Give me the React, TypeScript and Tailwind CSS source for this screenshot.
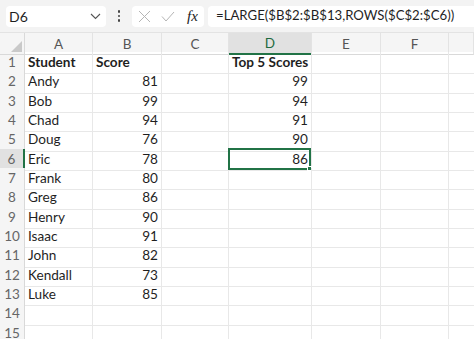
import React from 'react';

const rows: [string, string, string][] = [
    ["Student", "Score", "Top 5 Scores"],
    ["Andy", "81", "99"],
    ["Bob", "99", "94"],
    ["Chad", "94", "91"],
    ["Doug", "76", "90"],
    ["Eric", "78", "86"],
    ["Frank", "80", ""],
    ["Greg", "86", ""],
    ["Henry", "90", ""],
    ["Isaac", "91", ""],
    ["John", "82", ""],
    ["Kendall", "73", ""],
    ["Luke", "85", ""],
    ["", "", ""],
    ["", "", ""],
];

const columns: string[] = ["A", "B", "C", "D", "E", "F", ""];

const gridCols = "grid grid-cols-[25px_68px_69px_67px_83px_69px_68px_25px]";

const App = () => {
    return (
        <div className="w-[474px] h-[339px] overflow-hidden bg-white text-[#1f1f1f]"
             style={{fontFamily: 'Lato, "Open Sans", sans-serif'}}>
            {/* formula bar */}
            <div className="h-[33px] bg-[#f3f3f3] flex items-center pl-[6px] gap-[4px] border-b border-[#e3e3e3]">
                <div className="w-[100px] h-[21px] bg-white rounded-[4px] flex items-center justify-between pl-[3px] pr-[5px] text-[14px]">
                    <span>D6</span>
                    <svg width="11" height="7" viewBox="0 0 11 7" fill="none" stroke="#555" strokeWidth="1.1">
                        <path d="M1 1l4.5 4.5L10 1"/>
                    </svg>
                </div>
                <div className="w-[18px] flex flex-col items-center gap-[2px]">
                    <span className="w-[2.5px] h-[2.5px] rounded-full bg-[#444]"/>
                    <span className="w-[2.5px] h-[2.5px] rounded-full bg-[#444]"/>
                    <span className="w-[2.5px] h-[2.5px] rounded-full bg-[#444]"/>
                </div>
                <div className="w-[72px] h-[21px] bg-white rounded-[4px] flex items-center pl-[6px] gap-[10px]">
                    <svg width="13" height="13" viewBox="0 0 13 13" fill="none" stroke="#b5b5b5" strokeWidth="1">
                        <path d="M1 1l11 11M12 1L1 12"/>
                    </svg>
                    <svg width="14" height="11" viewBox="0 0 14 11" fill="none" stroke="#b5b5b5" strokeWidth="1">
                        <path d="M1 5.5l4 4.5L13 1"/>
                    </svg>
                    <span className="italic text-[15px] text-[#222] ml-[2px]"
                          style={{fontFamily: '"Liberation Serif", serif'}}>fx</span>
                </div>
                <div className="flex-1 h-[21px] bg-white rounded-l-[4px] flex items-center pl-[8px] text-[13.2px] whitespace-nowrap">
                    =LARGE($B$2:$B$13,ROWS($C$2:$C6))
                </div>
            </div>
            {/* column headers */}
            <div className={`${gridCols} h-[19px] bg-[#f5f5f5] text-[13.5px] text-[#555]`}>
                <div className="relative border-r border-[#d9d9d9] border-b">
                    <svg className="absolute right-[2px] bottom-[2px]" width="11" height="11" viewBox="0 0 11 11">
                        <path d="M11 0V11H0Z" fill="#c9c9c9"/>
                    </svg>
                </div>
                {columns.map((c, i) => (
                    <div key={i}
                         className={`flex items-center justify-center border-r border-[#e3e3e3] ${c === "D" ? "bg-[#e1e1e1] border-b-2 border-b-[#217346] text-[#1e6b40]" : "border-b border-b-[#d9d9d9]"}`}>
                        {c}
                    </div>
                ))}
            </div>
            {/* rows */}
            {rows.map((r, i) => (
                <div key={i} className={`${gridCols} h-[19.33px] text-[13.6px] whitespace-nowrap`}>
                    <div className={`flex items-end justify-center pb-[1px] text-[13.5px] text-[#666] ${i === 5 ? "bg-[#e1e1e1] border-r-2 border-[#217346] text-[#1e6b40]" : "bg-[#f5f5f5] border-r border-[#d9d9d9]"} border-b border-b-[#e8e8e8]`}>
                        {i + 1}
                    </div>
                    <div className={`flex items-end pl-[3px] pb-[1px] border-r border-b border-[#e8e8e8] ${i === 0 ? "font-bold" : ""}`}>
                        {r[0]}
                    </div>
                    <div className={`flex items-end pb-[1px] border-r border-b border-[#e8e8e8] ${i === 0 ? "font-bold pl-[3px]" : "justify-end pr-[3px]"}`}>
                        {r[1]}
                    </div>
                    <div className="border-r border-b border-[#e8e8e8]"/>
                    <div className={`relative flex items-end pb-[1px] border-r border-b border-[#e8e8e8] ${i === 0 ? "font-bold pl-[3px]" : "justify-end pr-[3px]"}`}>
                        {r[2]}
                        {i === 5 && (
                            <div className="absolute -left-[1px] -top-[1px] right-0 bottom-0 border-2 border-[#217346]">
                                <div className="absolute -right-[3px] -bottom-[3px] w-[5px] h-[5px] bg-[#217346] border border-white"/>
                            </div>
                        )}
                    </div>
                    <div className="border-r border-b border-[#e8e8e8]"/>
                    <div className="border-r border-b border-[#e8e8e8]"/>
                    <div className="border-b border-[#e8e8e8]"/>
                </div>
            ))}
        </div>
    );
};

export default App;
